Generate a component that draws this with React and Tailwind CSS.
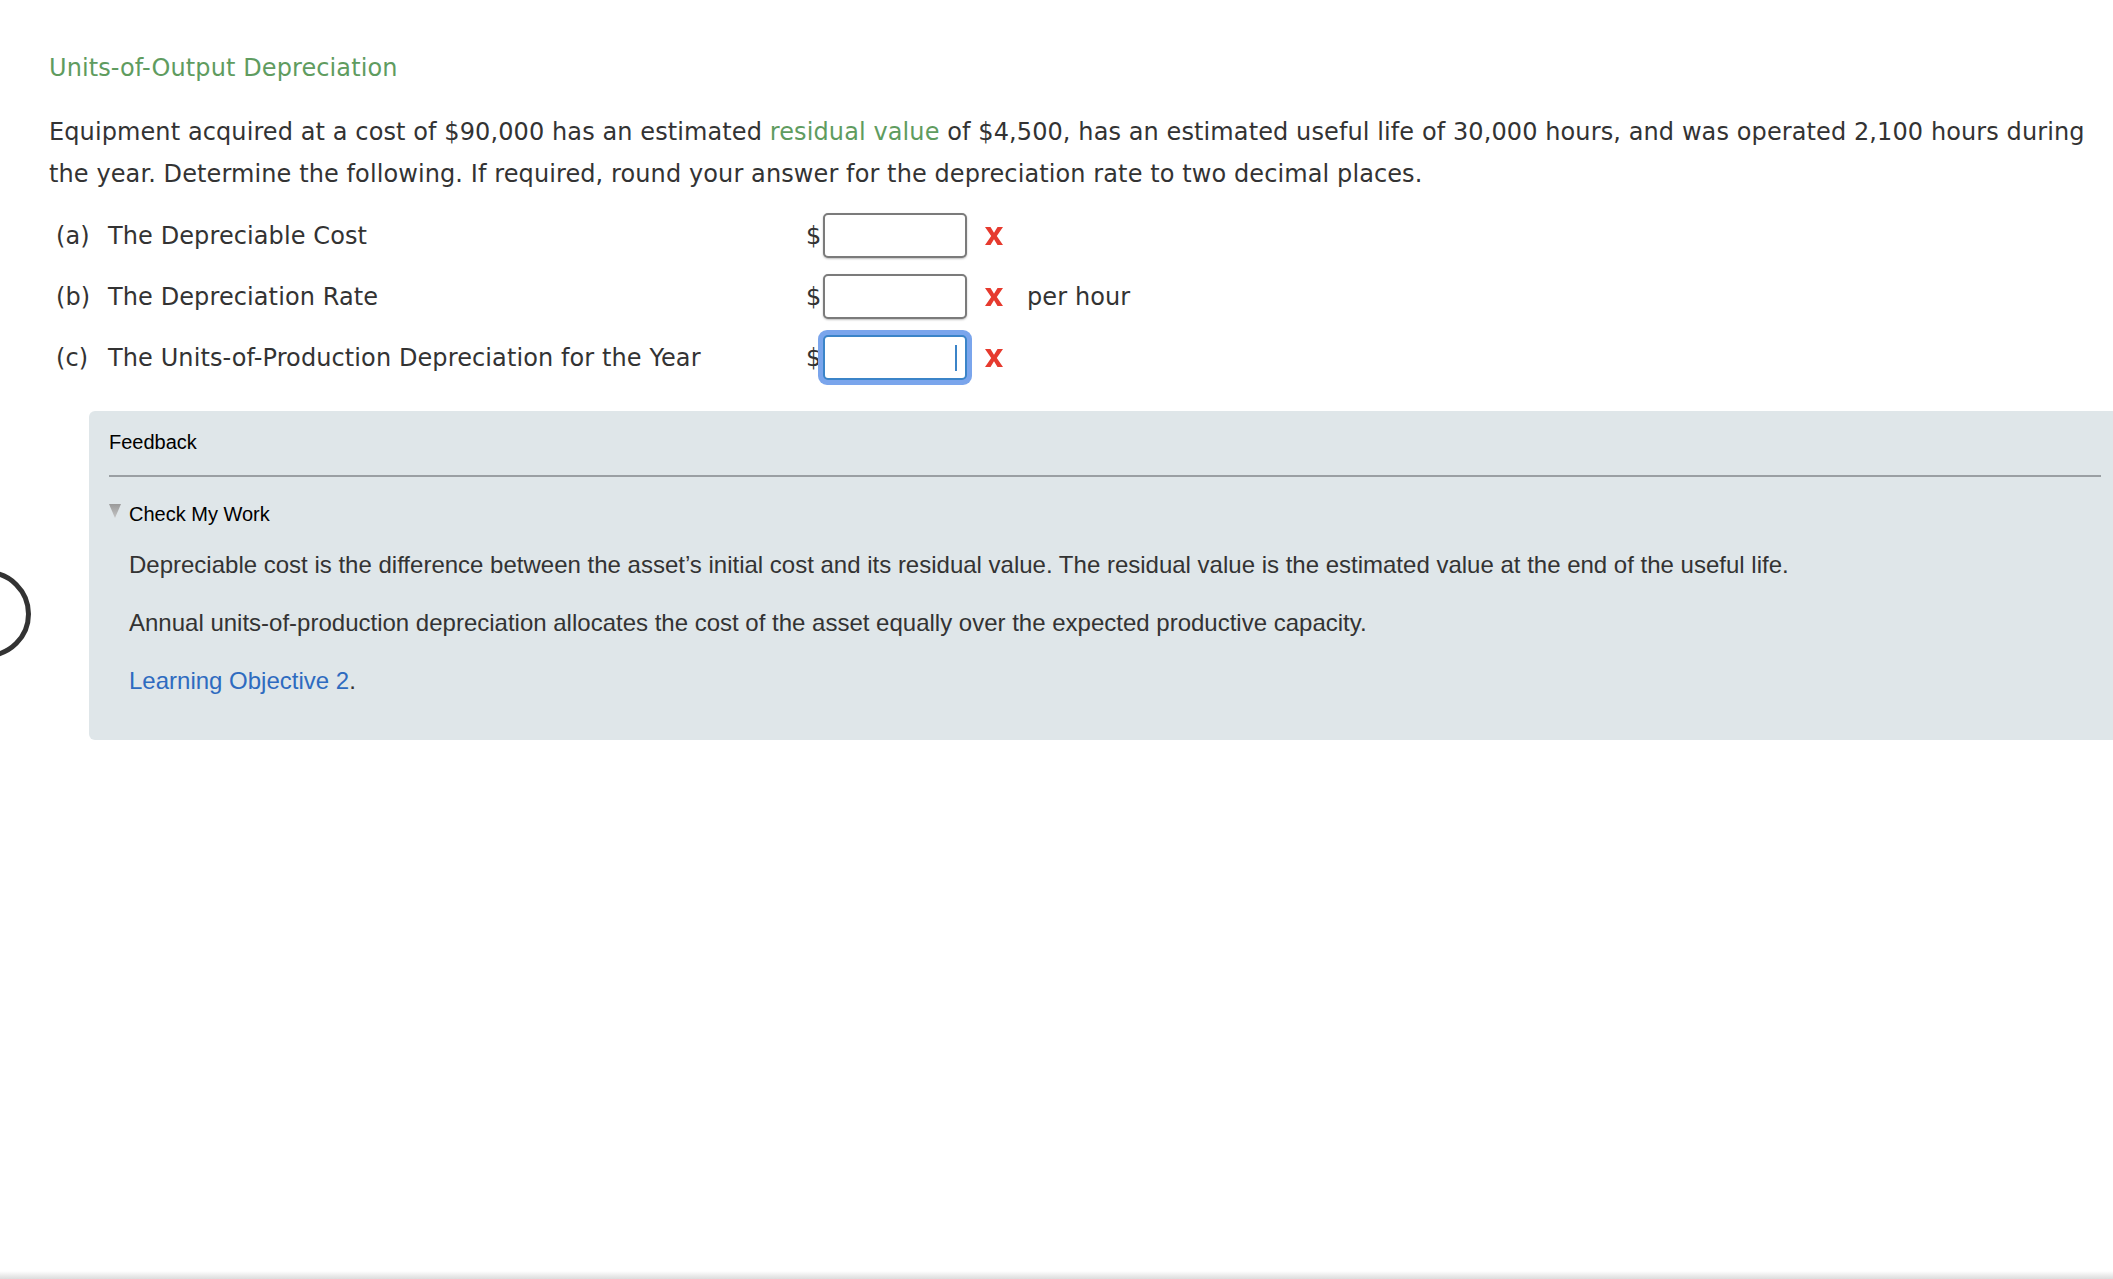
import React from 'react'

const rows = [
  { key: '(a)', label: 'The Depreciable Cost' },
  { key: '(b)', label: 'The Depreciation Rate', suffix: 'per hour' },
  { key: '(c)', label: 'The Units-of-Production Depreciation for the Year', focused: true },
]

function WrongMark() {
  return (
    <svg viewBox="0 0 20 20" className="ml-[17px] h-[20px] w-[20px]">
      <path d="M1 1h5.5L10 6.8 13.5 1H19l-6.2 9L19 19h-5.5L10 13.2 6.5 19H1l6.2-9z" fill="#e63a2e" />
    </svg>
  )
}

function AnswerRow({ row }) {
  return (
    <div className="flex h-[61px] items-center">
      <div className="flex w-[757px] pl-[7px]">
        <span className="w-[52px]">{row.key}</span>
        <span>{row.label}</span>
      </div>
      <span className="w-[17px]">$</span>
      {row.focused ? (
        <div className="-mx-[5px] rounded-[9px] bg-[#7aa5ec] p-[5px]">
          <div className="flex h-[45px] w-[144px] items-center justify-end rounded-[5px] border-2 border-[#3b84c8] bg-white pr-[8px]">
            <span className="h-[26px] w-[2px] bg-[#3b84c8]" />
          </div>
        </div>
      ) : (
        <div className="h-[45px] w-[144px] rounded-[5px] border-2 border-[#7b7b7b] bg-white shadow-[0_1px_2px_rgba(0,0,0,0.25)]" />
      )}
      <WrongMark />
      {row.suffix && <span className="ml-[23px]">{row.suffix}</span>}
    </div>
  )
}

export default function App() {
  return (
    <div className="relative min-h-[1279px] overflow-hidden bg-white font-['DejaVu_Sans',Verdana,sans-serif] text-[24px] tracking-[0.1px] text-[#333]">
      <div className="pl-[49px] pt-[50px]">
        <h1 className="text-[24px] font-normal leading-[36px] text-[#5f9c5f]">Units-of-Output Depreciation</h1>

        <p className="mt-[26px] pr-[20px] leading-[41.5px]">
          Equipment acquired at a cost of $90,000 has an estimated{' '}
          <span className="text-[#5f9c5f]">residual value</span> of $4,500, has an estimated useful life of 30,000
          hours, and was operated 2,100 hours during the year. Determine the following. If required, round your answer
          for the depreciation rate to two decimal places.
        </p>

        <div className="mt-[10px]">
          {rows.map((row) => (
            <AnswerRow key={row.key} row={row} />
          ))}
        </div>

        <section className="ml-[40px] mt-[23px] h-[329px] rounded-l-[6px] bg-[#dfe6e9] pl-[20px] pr-[12px] pt-[16px] font-['Liberation_Sans',Arial,sans-serif] tracking-normal text-[#222]">
          <div className="text-[20px] leading-[30px] text-black">Feedback</div>
          <div className="mt-[18px] h-[2px] bg-[#9a9fa3]" />
          <div className="mt-[22px] flex items-center text-[20px] leading-[30px] text-black">
            <svg viewBox="0 0 12 14" className="mr-[8px] -mt-[6px] h-[14px] w-[12px]">
              <defs>
                <linearGradient id="tri" x1="0" y1="0" x2="0" y2="1">
                  <stop offset="0" stopColor="#9a9a9a" />
                  <stop offset="1" stopColor="#c4c4c4" />
                </linearGradient>
              </defs>
              <path d="M0 0h12L6 14z" fill="url(#tri)" />
            </svg>
            Check My Work
          </div>
          <div className="pl-[20px] text-[24px] leading-[30px] text-[#333]">
            <p className="mt-[21px]">
              Depreciable cost is the difference between the asset’s initial cost and its residual value. The residual
              value is the estimated value at the end of the useful life.
            </p>
            <p className="mt-[28px]">
              Annual units-of-production depreciation allocates the cost of the asset equally over the expected
              productive capacity.
            </p>
            <p className="mt-[28px]">
              <a className="text-[#2e6bc0]">Learning Objective 2</a>.
            </p>
          </div>
        </section>
      </div>

      <div className="absolute left-[-57px] top-[570px] h-[88px] w-[88px] rounded-full border-[5px] border-[#333]" />
      <div className="absolute bottom-0 left-0 h-[8px] w-full bg-gradient-to-b from-white to-[#dcdcdc]" />
    </div>
  )
}
